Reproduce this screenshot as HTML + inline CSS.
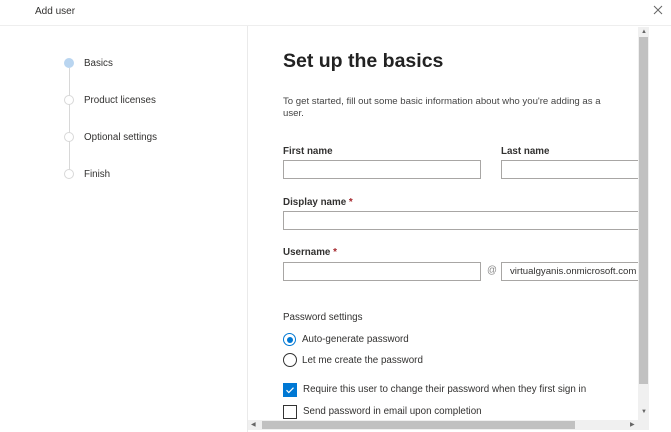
<!DOCTYPE html>
<html><head><style>
*{margin:0;padding:0;box-sizing:border-box}
body{width:671px;height:432px;overflow:hidden;background:#fff;font-family:"Liberation Sans",sans-serif;color:#323130;position:relative}
.a{position:absolute}
.t{font-size:9.8px;white-space:nowrap}
.inp{position:absolute;height:19px;border:1px solid #a8a6a4;background:#fff}
.lbl{font-size:9.8px;font-weight:bold;color:#323130}
.c{position:absolute;width:10px;height:10px;border-radius:50%;border:1px solid #d8d8d8;background:#fff}
</style></head><body>
<div class="a t" style="left:35px;top:6px;font-size:10px">Add user</div>
<svg class="a" style="left:653px;top:5px" width="10" height="10"><path d="M1 1L9 9M9 1L1 9" stroke="#666" stroke-width="1" fill="none"/></svg>
<div class="a" style="left:0;top:25px;width:671px;height:1px;background:#eeeeee"></div>
<div class="a" style="left:247px;top:26px;width:1px;height:406px;background:#eaeaea"></div>
<div class="a" style="left:69px;top:68px;width:1px;height:110px;background:#d8d8d8"></div>
<div class="c" style="left:64px;top:58px;background:#b9d5f0;border-color:#b9d5f0"></div>
<div class="c" style="left:64px;top:95px"></div>
<div class="c" style="left:64px;top:132px"></div>
<div class="c" style="left:64px;top:169px"></div>
<div class="a t" style="left:84px;top:58px">Basics</div>
<div class="a t" style="left:84px;top:95px">Product licenses</div>
<div class="a t" style="left:84px;top:132px">Optional settings</div>
<div class="a t" style="left:84px;top:169px">Finish</div>
<div class="a" style="left:283px;top:50px;font-size:19.5px;font-weight:bold;color:#222">Set up the basics</div>
<div class="a t" style="left:283px;top:96px;font-size:9.6px;line-height:12px;color:#444">To get started, fill out some basic information about who you're adding as a<br>user.</div>
<div class="a lbl" style="left:283px;top:146px">First name</div>
<div class="a lbl" style="left:501px;top:146px">Last name</div>
<div class="inp" style="left:283px;top:160px;width:198px"></div>
<div class="inp" style="left:501px;top:160px;width:140px"></div>
<div class="a lbl" style="left:283px;top:197px">Display name <span style="color:#a4262c">*</span></div>
<div class="inp" style="left:283px;top:211px;width:358px"></div>
<div class="a lbl" style="left:283px;top:247px">Username <span style="color:#a4262c">*</span></div>
<div class="inp" style="left:283px;top:262px;width:198px"></div>
<div class="a t" style="left:487px;top:265px;color:#888">@</div>
<div class="inp" style="left:501px;top:262px;width:140px;overflow:hidden"><span class="t" style="position:absolute;left:8px;top:3px;font-size:9.6px">virtualgyanis.onmicrosoft.com</span></div>
<div class="a t" style="left:283px;top:312px">Password settings</div>
<div class="a" style="left:283px;top:333px;width:13px;height:13px;border-radius:50%;border:1px solid #0078d4"><div style="margin:2.5px;width:6px;height:6px;border-radius:50%;background:#0078d4"></div></div>
<div class="a t" style="left:302px;top:334px">Auto-generate password</div>
<div class="a" style="left:283px;top:353px;width:14px;height:14px;border-radius:50%;border:1px solid #333"></div>
<div class="a t" style="left:302px;top:355px">Let me create the password</div>
<div class="a" style="left:283px;top:383px;width:14px;height:14px;background:#0078d4"><svg width="14" height="14"><path d="M3.5 7.2l2.3 2.3 4.7-4.8" stroke="#fff" stroke-width="1.2" fill="none"/></svg></div>
<div class="a t" style="left:303px;top:384px">Require this user to change their password when they first sign in</div>
<div class="a" style="left:283px;top:405px;width:14px;height:14px;border:1px solid #333"></div>
<div class="a t" style="left:303px;top:406px">Send password in email upon completion</div>
<div class="a" style="left:638px;top:27px;width:11px;height:393px;background:#f0f0f0"></div>
<div class="a" style="left:639px;top:37px;width:9px;height:347px;background:#c1c1c1"></div>
<div class="a" style="left:641px;top:29px;font-size:6px;color:#666">▲</div>
<div class="a" style="left:641px;top:409px;font-size:6px;color:#666">▼</div>
<div class="a" style="left:248px;top:420px;width:401px;height:10px;background:#f0f0f0"></div>
<div class="a" style="left:262px;top:421px;width:313px;height:8px;background:#c1c1c1"></div>
<div class="a" style="left:251px;top:421px;font-size:6px;color:#666">◀</div>
<div class="a" style="left:630px;top:421px;font-size:6px;color:#666">▶</div>
</body></html>
